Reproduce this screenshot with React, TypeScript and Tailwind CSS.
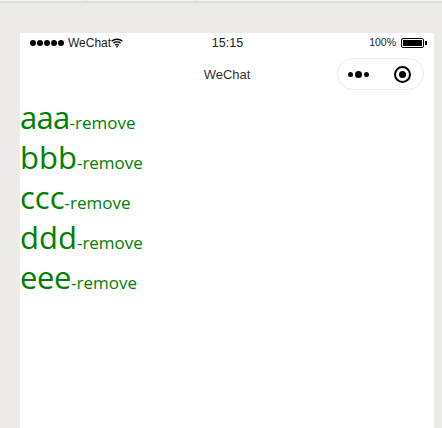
import React from "react"

const items = [
  { label: "aaa", spacing: "tracking-[-0.7px]" },
  { label: "bbb", spacing: "tracking-normal" },
  { label: "ccc", spacing: "tracking-normal" },
  { label: "ddd", spacing: "tracking-normal" },
  { label: "eee", spacing: "tracking-[-0.4px]" },
]

function Dots() {
  return (
    <div className="flex items-center gap-[1px]">
      {[0, 1, 2, 3, 4].map((i) => (
        <span key={i} className="w-[6px] h-[6px] rounded-full bg-black" />
      ))}
    </div>
  )
}

function Wifi() {
  return (
    <svg width="12" height="10" viewBox="0 0 12 10" fill="none" stroke="black" strokeWidth="1.4">
      <path d="M0.6 3.2C3.6 0.6 8.4 0.6 11.4 3.2" />
      <path d="M2.4 5.2C4.4 3.5 7.6 3.5 9.6 5.2" />
      <path d="M4.2 7.1C5.2 6.3 6.8 6.3 7.8 7.1" />
      <circle cx="6" cy="8.6" r="0.9" fill="black" stroke="none" />
    </svg>
  )
}

function Battery() {
  return (
    <div className="flex items-center gap-[1px]">
      <div className="w-[23px] h-[10px] border border-black rounded-[2px] p-[1px]">
        <div className="w-full h-full bg-black" />
      </div>
      <div className="w-[2px] h-[4px] bg-black" />
    </div>
  )
}

export default function App() {
  return (
    <div className="w-[442px] h-[428px] overflow-hidden bg-[#ecebe8] flex flex-col font-['Liberation_Sans',sans-serif]">
      {/* Top strip */}
      <div className="h-[3px] border-b-2 border-[#dcdcdc] bg-[#f3f3f1] flex shrink-0">
        <div className="w-[87px] border-r border-[#dcdcdc]" />
        <div className="w-[110px] border-r border-[#dcdcdc]" />
      </div>

      <div className="mt-[30px] ml-[20px] w-[414px] flex-1 bg-white">
        {/* Status bar */}
        <div className="h-[20px] pl-[10px] pr-[7px] grid grid-cols-3 items-center text-[12px] text-[#222]">
          <div className="flex items-center gap-[4px]">
            <Dots />
            <span className="text-[12px]">WeChat</span>
            <div className="-ml-[4px]">
              <Wifi />
            </div>
          </div>
          <div className="text-center text-[12.5px] -translate-x-[1px]">15:15</div>
          <div className="flex items-center justify-end gap-[5px]">
            <span className="text-[10.5px]">100%</span>
            <Battery />
          </div>
        </div>

        {/* Nav bar */}
        <div className="h-[44px] relative flex items-center justify-center mt-[-1px] pt-[4px]">
          <span className="text-[13px] text-[#333] -translate-y-[1px]">WeChat</span>
          <div className="absolute right-[10px] top-[6px] w-[87px] h-[32px] rounded-full border border-[#ebebeb] bg-white flex items-center">
            <div className="flex-1 flex items-center justify-center gap-[2px] pr-[2px]">
              <span className="w-[5px] h-[5px] rounded-full bg-black" />
              <span className="w-[7px] h-[7px] rounded-full bg-black" />
              <span className="w-[5px] h-[5px] rounded-full bg-black" />
            </div>
            <div className="flex-1 flex items-center justify-center pl-[2px] pt-[1px]">
              <div className="w-[17px] h-[17px] rounded-full border-2 border-black flex items-center justify-center">
                <span className="w-[7px] h-[7px] rounded-full bg-black" />
              </div>
            </div>
          </div>
        </div>

        {/* List */}
        <div className="mt-[1px] font-['Open_Sans',sans-serif] text-[#008000]">
          {items.map((item) => (
            <div key={item.label} className="h-[40px] leading-[40px] whitespace-nowrap">
              <span className={`text-[31px] ${item.spacing}`}>{item.label}</span>
              <span className="text-[17px]">-remove</span>
            </div>
          ))}
        </div>
      </div>
    </div>
  )
}
